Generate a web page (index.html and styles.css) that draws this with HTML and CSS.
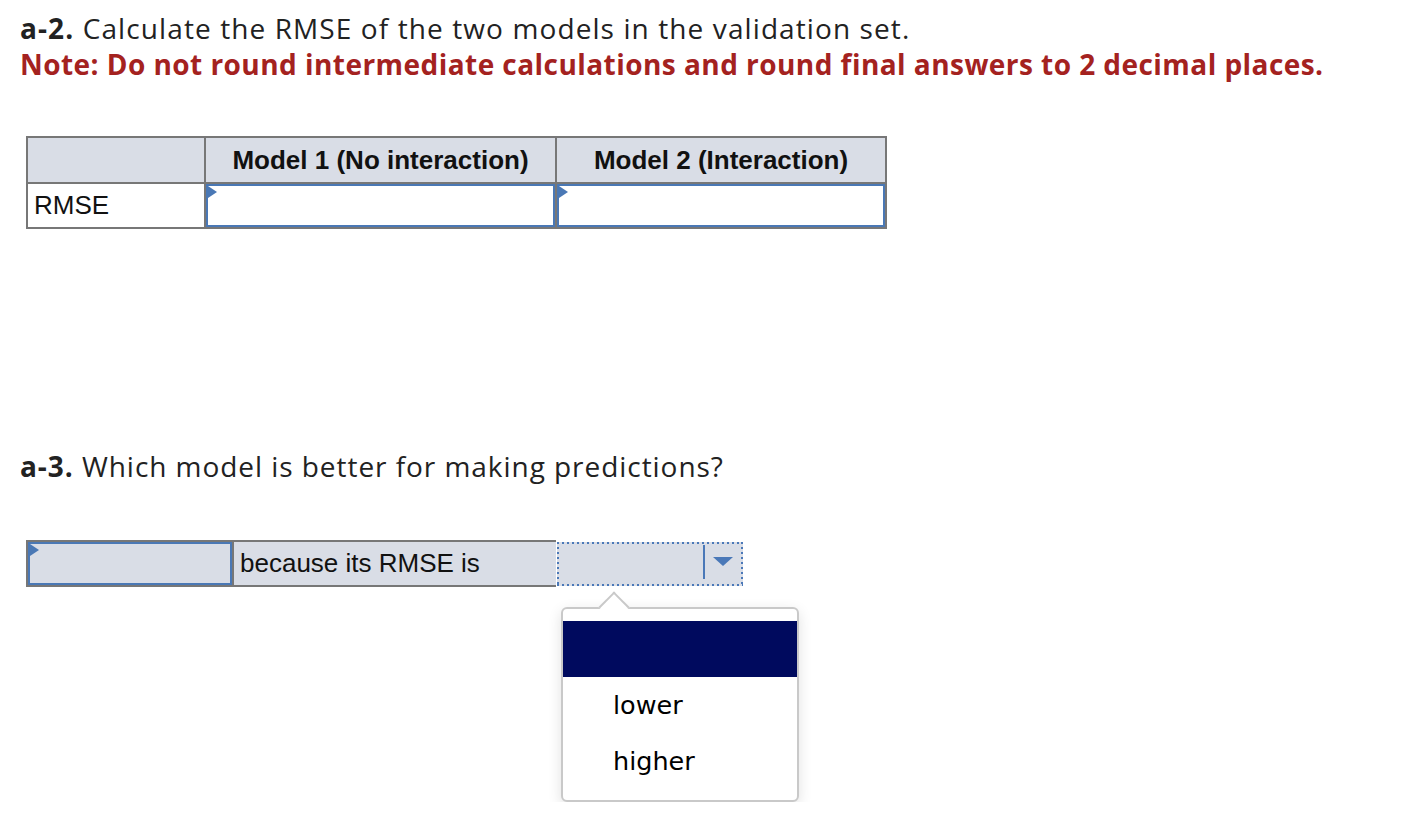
FILE: index.html
```html
<!DOCTYPE html>
<html lang="en">
<head>
<meta charset="utf-8">
<title>RMSE</title>
<link rel="stylesheet" href="styles.css">
</head>
<body>
<div class="page">
  <div class="q">
    <p class="line l1"><b>a-2.</b> Calculate the RMSE of the two models in the validation set.</p>
    <p class="line note">Note: Do not round intermediate calculations and round final answers to 2 decimal places.</p>
  </div>

  <div class="tbl">
    <div class="th"></div>
    <div class="th">Model 1 (No interaction)</div>
    <div class="th">Model 2 (Interaction)</div>
    <div class="td label">RMSE</div>
    <div class="td"><div class="inp"></div></div>
    <div class="td"><div class="inp"></div></div>
  </div>

  <p class="line q3"><b>a-3.</b> Which model is better for making predictions?</p>

  <div class="row">
    <div class="cell first"><div class="inp light"></div></div>
    <div class="cell text">because its RMSE is</div>
    <div class="select">
      <div class="sel-value"></div>
      <div class="sel-btn"><span class="caret"></span></div>
    </div>
  </div>

  <div class="listbox">
    <div class="opt active"></div>
    <div class="opt">lower</div>
    <div class="opt">higher</div>
  </div>
</div>
</body>
</html>
```

FILE: styles.css
```css
html, body {
  margin: 0;
  padding: 0;
  background: #ffffff;
}

.page {
  padding: 10px 20px 0 20px;
  font-family: "Open Sans", Lato, sans-serif;
  color: #222222;
}

.line {
  margin: 0;
  font-size: 28px;
  line-height: 36px;
  letter-spacing: 0.95px;
  white-space: nowrap;
}

.line.l1 {
  letter-spacing: 1.1px;
}

.line b {
  font-weight: 700;
}

.note {
  color: #a4221f;
  font-weight: 700;
  letter-spacing: 0.45px;
}

.tbl {
  margin: 54px 0 0 6px;
  display: grid;
  grid-template-columns: 176px 349px 328px;
  grid-template-rows: 44px 43px;
  gap: 2px;
  width: max-content;
  background: #777777;
  border: 2px solid #777777;
  font-family: "Liberation Sans", Arial, sans-serif;
  font-size: 26px;
  color: #111111;
}

.th {
  background: #d9dde6;
  font-weight: 700;
  display: flex;
  align-items: center;
  justify-content: center;
}

.td {
  background: #ffffff;
  display: flex;
}

.td.label {
  align-items: center;
  padding-left: 6px;
}

.inp {
  position: relative;
  flex: 1;
  box-sizing: border-box;
  border: 2px solid #4a78b5;
  background: #ffffff;
}

.inp::before {
  content: "";
  position: absolute;
  left: 0;
  top: 0;
  width: 0;
  height: 0;
  border-left: 9px solid #4a78b5;
  border-top: 6px solid transparent;
  border-bottom: 6px solid transparent;
}

.q3 {
  margin-top: 219px;
}

.row {
  margin: 56px 0 0 6px;
  display: flex;
  height: 47px;
  font-family: "Liberation Sans", Arial, sans-serif;
  font-size: 26px;
  color: #111111;
}

.cell {
  box-sizing: border-box;
  background: #d9dde6;
  border-top: 2px solid #777777;
  border-bottom: 2px solid #777777;
  display: flex;
}

.cell.first {
  width: 208px;
  border-left: 2px solid #777777;
  border-right: 2px solid #777777;
}

.inp.light {
  background: #d9dde6;
}

.cell.text {
  width: 322px;
  align-items: center;
  padding-left: 6px;
}

.select {
  box-sizing: border-box;
  width: 186px;
  height: 44px;
  margin-top: 2px;
  margin-left: 1px;
  padding: 2px;
  background:
    repeating-linear-gradient(to right, #4a78b8 0 2px, transparent 2px 5px) left top / 100% 2px no-repeat,
    repeating-linear-gradient(to right, #4a78b8 0 2px, transparent 2px 5px) left bottom / 100% 2px no-repeat,
    repeating-linear-gradient(to bottom, #4a78b8 0 2px, transparent 2px 5px) left top / 2px 100% no-repeat,
    repeating-linear-gradient(to bottom, #4a78b8 0 2px, transparent 2px 5px) right top / 2px 100% no-repeat,
    #d9dde6;
  display: flex;
  align-items: stretch;
}

.sel-value {
  flex: 1;
  border-right: 2px solid #4a78b8;
  margin: 1px 0 5px 0;
}

.sel-btn {
  width: 36px;
  display: flex;
  align-items: center;
  justify-content: center;
}

.caret {
  width: 0;
  height: 0;
  border-left: 10px solid transparent;
  border-right: 10px solid transparent;
  border-top: 9px solid #4a78b8;
  margin-top: -6px;
}

.listbox {
  position: relative;
  margin: 20px 0 0 541px;
  width: 238px;
  box-sizing: border-box;
  padding: 12px 0 11px 0;
  background: #ffffff;
  border: 2px solid #c9c9c9;
  border-radius: 6px;
  box-shadow: 0 4px 14px rgba(0, 0, 0, 0.12);
  font-family: "DejaVu Sans", sans-serif;
  font-size: 25.5px;
  color: #000000;
}

.listbox::before {
  content: "";
  position: absolute;
  left: 40px;
  top: -13px;
  width: 20px;
  height: 20px;
  background: #ffffff;
  border-top: 2px solid #c9c9c9;
  border-left: 2px solid #c9c9c9;
  transform: rotate(45deg);
}

.opt {
  position: relative;
  height: 56px;
  line-height: 56px;
  padding-left: 50px;
}

.opt.active {
  background: #000a5e;
}
```
